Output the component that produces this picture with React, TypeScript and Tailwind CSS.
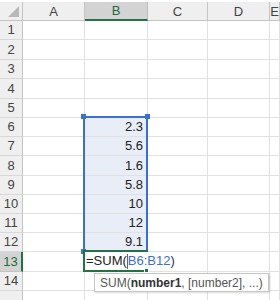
import React from "react";

const cols = ["A", "B", "C", "D", "E"];
const values: Record<number, string> = { 6: "2.3", 7: "5.6", 8: "1.6", 9: "5.8", 10: "10", 11: "12", 12: "9.1" };
const rows = Array.from({ length: 15 }, (_, i) => i + 1);

export default function App() {
  return (
    <div
      className="relative w-[280px] h-[300px] overflow-hidden bg-white text-[#222]"
      style={{ fontFamily: '"Liberation Sans", Arial, sans-serif' }}
    >
      <div className="h-[2px] bg-white" />
      <div className="grid grid-cols-[23px_62px_63px_60px_62px_1fr] grid-rows-[19px_19px_20px_19px_20px_19px_19px_19px_20px_19px_19px_19px_19px_20px_19px_19px]">
        {/* header row */}
        <div className="relative bg-[#efefef] border-r border-b border-[#c4c4c4]">
          <svg className="absolute left-0 top-0" width="23" height="19" viewBox="0 0 23 19">
            <polygon points="19,4 19,15 8,15" fill="#b9b9b9" />
          </svg>
        </div>
        {cols.map((c) => (
          <div
            key={c}
            className={
              c === "B"
                ? "flex items-center justify-center bg-[#d3d3d3] border-r border-[#bdbdbd] border-b-2 border-b-[#217346] text-[13px] text-[#1e6b40] pt-[1px]"
                : "flex items-center justify-center bg-[#efefef] border-r border-b border-[#c4c4c4] text-[13px] text-[#444] pt-[1px]"
            }
          >
            {c}
          </div>
        ))}
        {rows.map((r) => (
          <React.Fragment key={r}>
            <div
              className={
                r === 13
                  ? "flex items-center justify-center bg-[#d3d3d3] border-b border-[#c4c4c4] border-r-2 border-r-[#217346] text-[13px] text-[#1e6b40]"
                  : "flex items-center justify-center bg-[#efefef] border-r border-b border-[#c4c4c4] border-b-[#d8d8d8] text-[13px] text-[#444]"
              }
            >
              {r < 15 ? r : ""}
            </div>
            {cols.map((c) => {
              const sel = c === "B" && r >= 6 && r <= 12;
              return (
                <div
                  key={c}
                  className={
                    (sel ? "bg-[#e8edf7] " : "") +
                    "flex items-center justify-end pr-[4px] border-r border-b border-[#e1e1e1] text-[13px] text-[#222]"
                  }
                >
                  {sel ? values[r] : ""}
                </div>
              );
            })}
          </React.Fragment>
        ))}
      </div>

      {/* range B6:B12 highlight */}
      <div className="absolute left-[83px] top-[116px] w-[65px] h-[136px] border-2 border-[#3c70cf]" />
      <div className="absolute left-[81px] top-[114px] w-[5px] h-[5px] bg-[#3c70cf]" />
      <div className="absolute left-[145px] top-[114px] w-[5px] h-[5px] bg-[#3c70cf]" />
      <div className="absolute left-[81px] top-[249px] w-[5px] h-[5px] bg-[#3c70cf]" />

      {/* active cell B13 */}
      <div className="absolute left-[83px] top-[250px] w-[65px] h-[22px] border-2 border-[#217346]" />
      <div className="absolute left-[85px] top-[252px] h-[18px] pl-[1px] pr-[2px] bg-white flex items-center whitespace-nowrap text-[13px] text-[#222]">
        <span>=SUM(</span>
        <span className="inline-block w-px h-[15px] bg-[#666]" />
        <span className="text-[#3c70cf]">B6:B12</span>
        <span className="text-[#2f2f5f]">)</span>
      </div>
      <div className="absolute left-[144px] top-[268px] w-[5px] h-[5px] bg-[#217346] border border-white" />

      {/* tooltip */}
      <div className="absolute left-[94px] top-[273px] h-[19px] px-[5px] bg-white border border-[#c6c6c6] shadow-[1px_1px_2px_rgba(0,0,0,0.15)] flex items-center whitespace-nowrap text-[12px] text-[#555]">
        SUM(<span className="font-bold text-[#333]">number1</span>, [number2], ...)
      </div>
    </div>
  );
}
